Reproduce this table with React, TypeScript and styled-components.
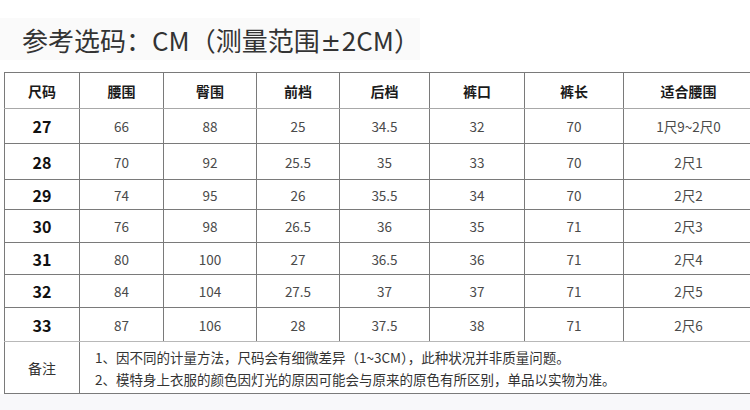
import React, { FC } from 'react';
import styled, { createGlobalStyle } from 'styled-components';

const GlobalStyle = createGlobalStyle`
  html, body {
    margin: 0;
    padding: 0;
    background: #ffffff;
  }
  body {
    font-family: "Noto Sans CJK SC", "DejaVu Sans", sans-serif;
  }
`;

const Page = styled.div`
  width: 750px;
  height: 410px;
  padding-top: 18px;
  box-sizing: border-box;
  background: #ffffff;
  overflow: hidden;
`;

const TitleBar = styled.div`
  width: 420px;
  height: 42px;
  padding-left: 22px;
  box-sizing: border-box;
  display: flex;
  align-items: center;
  background: #fafafa;
`;

const Title = styled.h1`
  margin: 0;
  font-size: 26px;
  font-weight: 400;
  color: #333333;
  white-space: nowrap;
`;

const Latin = styled.span`
  font-family: "DejaVu Sans", "Liberation Sans", sans-serif;
  font-size: 24px;
  margin: 0 1px;
`;

const Table = styled.table`
  margin: 12px 0 0 4px;
  width: 741px;
  border-collapse: collapse;
  table-layout: fixed;
`;

const Row = styled.tr<{ $h: number }>`
  height: ${(p) => p.$h}px;
`;

const HeadCell = styled.th<{ $w: number }>`
  width: ${(p) => p.$w}px;
  border: 1px solid #7a7a7a;
  border-bottom-color: #a8a8a8;
  font-size: 14px;
  font-weight: 700;
  color: #1a1a1a;
  text-align: center;
  padding: 0;
`;

const Cell = styled.td<{ $bold?: boolean; $light?: boolean }>`
  border: 1px solid #7a7a7a;
  border-bottom-color: ${(p) => (p.$light ? '#b8b8b8' : '#7a7a7a')};
  font-size: ${(p) => (p.$bold ? '16px' : '13.5px')};
  font-weight: ${(p) => (p.$bold ? 700 : 400)};
  color: ${(p) => (p.$bold ? '#111111' : '#4a4a4a')};
  text-align: center;
  padding: 0;
`;

const NoteLabel = styled.td`
  border: 1px solid #7a7a7a;
  font-size: 14px;
  color: #333333;
  text-align: center;
  padding: 0;
`;

const NoteBody = styled.td`
  border: 1px solid #7a7a7a;
  padding: 4px 0 0 15px;
  font-size: 13.5px;
  line-height: 22px;
  color: #333333;
  text-align: left;
  vertical-align: top;
  white-space: nowrap;
`;

const FooterBand = styled.div`
  height: 17px;
  background: #f8f8fa;
`;

const columns = [
  { label: '尺码', w: 74 },
  { label: '腰围', w: 83 },
  { label: '臀围', w: 92 },
  { label: '前档', w: 82 },
  { label: '后档', w: 89 },
  { label: '裤口', w: 94 },
  { label: '裤长', w: 98 },
  { label: '适合腰围', w: 129 }
];

const rows: { h: number; cells: string[] }[] = [
  { h: 35, cells: ['27', '66', '88', '25', '34.5', '32', '70', '1尺9~2尺0'] },
  { h: 36, cells: ['28', '70', '92', '25.5', '35', '33', '70', '2尺1'] },
  { h: 30, cells: ['29', '74', '95', '26', '35.5', '34', '70', '2尺2'] },
  { h: 33, cells: ['30', '76', '98', '26.5', '36', '35', '71', '2尺3'] },
  { h: 32, cells: ['31', '80', '100', '27', '36.5', '36', '71', '2尺4'] },
  { h: 33, cells: ['32', '84', '104', '27.5', '37', '37', '71', '2尺5'] },
  { h: 34, cells: ['33', '87', '106', '28', '37.5', '38', '71', '2尺6'] }
];

const App: FC = () => {
  return (
    <Page>
      <GlobalStyle />
      <TitleBar>
        <Title>
          参考选码：CM（测量范围<Latin>±</Latin>2CM）
        </Title>
      </TitleBar>
      <Table>
        <thead>
          <Row $h={36}>
            {columns.map((col) => (
              <HeadCell key={col.label} $w={col.w}>
                {col.label}
              </HeadCell>
            ))}
          </Row>
        </thead>
        <tbody>
          {rows.map((row, index) => (
            <Row key={row.cells[0]} $h={row.h}>
              {row.cells.map((value, i) => (
                <Cell
                  key={i}
                  $bold={i === 0}
                  $light={index === rows.length - 1}
                >
                  {value}
                </Cell>
              ))}
            </Row>
          ))}
          <Row $h={52}>
            <NoteLabel>备注</NoteLabel>
            <NoteBody colSpan={7}>
              1、因不同的计量方法，尺码会有细微差异（1~3CM），此种状况并非质量问题。
              <br />
              2、模特身上衣服的颜色因灯光的原因可能会与原来的原色有所区别，单品以实物为准。
            </NoteBody>
          </Row>
        </tbody>
      </Table>
      <FooterBand />
    </Page>
  );
};

export default App;
